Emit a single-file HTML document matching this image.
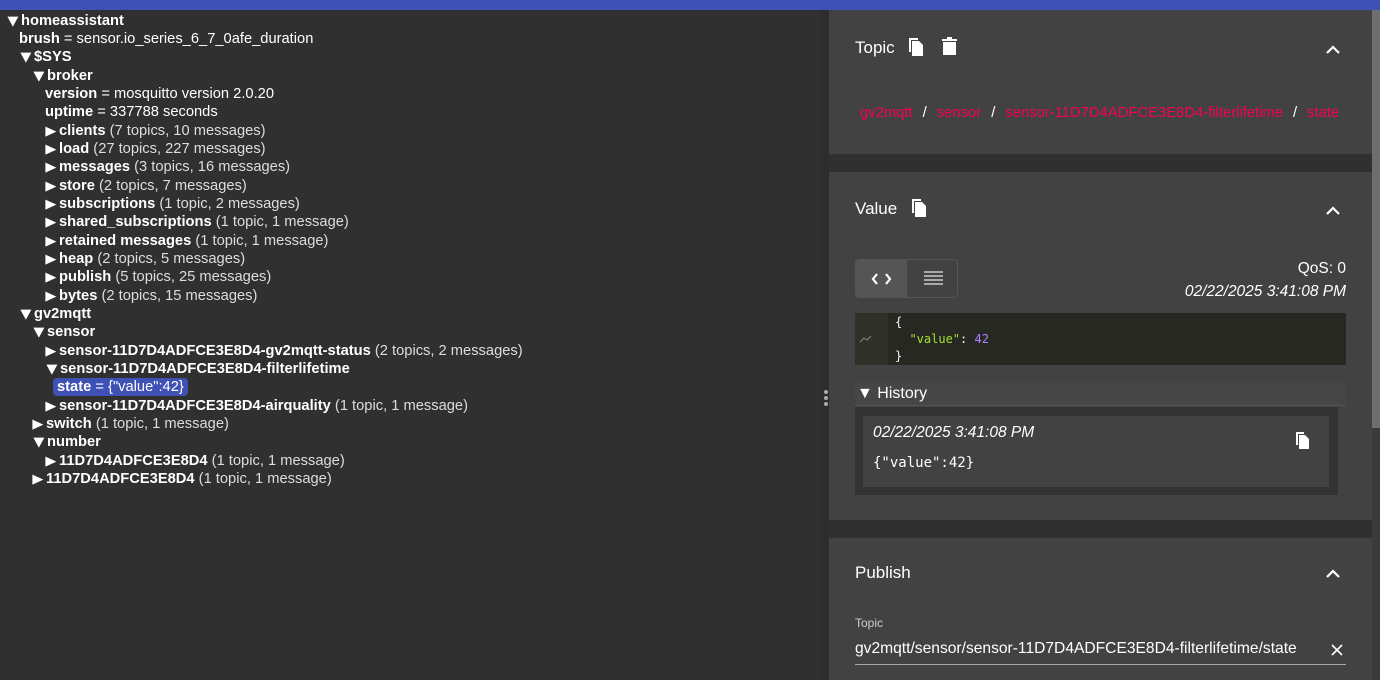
<!DOCTYPE html>
<html><head><meta charset="utf-8"><style>
*{margin:0;padding:0;box-sizing:border-box}
body{width:1380px;height:680px;overflow:hidden;background:#303030;font-family:"Liberation Sans",Arial,sans-serif;color:#fff;position:relative}
.top{position:absolute;left:0;top:0;width:1380px;height:10px;background:#3f51b5}
.tree{position:absolute;left:0;top:11px;width:820px;height:669px;background:#303030}
.r{position:absolute;font-size:14.7px;line-height:18px;white-space:nowrap;color:#fff}
.r b{font-weight:bold}
.r .m{color:#ddd}
.a{display:inline-block;width:13px;font-size:13px;font-family:"DejaVu Sans",sans-serif;transform:scaleX(1.1)}
.div{position:absolute;left:820px;top:10px;width:9px;height:670px;background:#2d2d2d}
.dots{position:absolute;left:824px;top:390px;width:4px}
.dots i{display:block;width:4px;height:4px;border-radius:2px;background:#aaa;margin-bottom:2px}
.p{position:absolute;left:829px;width:543px;background:#424242}
.sb{position:absolute;left:1372px;top:10px;width:8px;height:670px;background:#3b3b3b}
.sb i{position:absolute;left:0;top:0;width:8px;height:418px;background:#6e6e6e}
.t{position:absolute;font-size:17px}
.crumb{position:absolute;left:860px;top:105px;font-size:14.8px;color:#f50057;white-space:nowrap}
.crumb s{text-decoration:none;color:#fff;margin:0 10px}
</style></head><body>
<div class="top"></div>
<div class="tree">
<div class="r" style="left:8px;top:1px"><span class="a">▼</span><b>homeassistant</b></div>
<div class="r" style="left:19px;top:19px"><b>brush</b> = sensor.io_series_6_7_0afe_duration</div>
<div class="r" style="left:21px;top:37px"><span class="a">▼</span><b>$SYS</b></div>
<div class="r" style="left:34px;top:56px"><span class="a">▼</span><b>broker</b></div>
<div class="r" style="left:45px;top:74px"><b>version</b> = mosquitto version 2.0.20</div>
<div class="r" style="left:45px;top:92px"><b>uptime</b> = 337788 seconds</div>
<div class="r" style="left:46px;top:111px"><span class="a">▶</span><b>clients</b> <span class="m">(7 topics, 10 messages)</span></div>
<div class="r" style="left:46px;top:129px"><span class="a">▶</span><b>load</b> <span class="m">(27 topics, 227 messages)</span></div>
<div class="r" style="left:46px;top:147px"><span class="a">▶</span><b>messages</b> <span class="m">(3 topics, 16 messages)</span></div>
<div class="r" style="left:46px;top:166px"><span class="a">▶</span><b>store</b> <span class="m">(2 topics, 7 messages)</span></div>
<div class="r" style="left:46px;top:184px"><span class="a">▶</span><b>subscriptions</b> <span class="m">(1 topic, 2 messages)</span></div>
<div class="r" style="left:46px;top:202px"><span class="a">▶</span><b>shared_subscriptions</b> <span class="m">(1 topic, 1 message)</span></div>
<div class="r" style="left:46px;top:221px"><span class="a">▶</span><b>retained messages</b> <span class="m">(1 topic, 1 message)</span></div>
<div class="r" style="left:46px;top:239px"><span class="a">▶</span><b>heap</b> <span class="m">(2 topics, 5 messages)</span></div>
<div class="r" style="left:46px;top:257px"><span class="a">▶</span><b>publish</b> <span class="m">(5 topics, 25 messages)</span></div>
<div class="r" style="left:46px;top:276px"><span class="a">▶</span><b>bytes</b> <span class="m">(2 topics, 15 messages)</span></div>
<div class="r" style="left:21px;top:294px"><span class="a">▼</span><b>gv2mqtt</b></div>
<div class="r" style="left:34px;top:312px"><span class="a">▼</span><b>sensor</b></div>
<div class="r" style="left:46px;top:331px"><span class="a">▶</span><b>sensor-11D7D4ADFCE3E8D4-gv2mqtt-status</b> <span class="m">(2 topics, 2 messages)</span></div>
<div class="r" style="left:47px;top:349px"><span class="a">▼</span><b>sensor-11D7D4ADFCE3E8D4-filterlifetime</b></div>
<div class="r" style="left:53px;top:367px;background:#3f51b5;border-radius:4px;padding:0 4px"><b>state</b> = {"value":42}</div>
<div class="r" style="left:46px;top:386px"><span class="a">▶</span><b>sensor-11D7D4ADFCE3E8D4-airquality</b> <span class="m">(1 topic, 1 message)</span></div>
<div class="r" style="left:33px;top:404px"><span class="a">▶</span><b>switch</b> <span class="m">(1 topic, 1 message)</span></div>
<div class="r" style="left:34px;top:422px"><span class="a">▼</span><b>number</b></div>
<div class="r" style="left:46px;top:441px"><span class="a">▶</span><b>11D7D4ADFCE3E8D4</b> <span class="m">(1 topic, 1 message)</span></div>
<div class="r" style="left:33px;top:459px"><span class="a">▶</span><b>11D7D4ADFCE3E8D4</b> <span class="m">(1 topic, 1 message)</span></div>
</div>
<div class="div"></div>
<div class="dots"><i></i><i></i><i></i></div>

<div class="p" style="top:10px;height:144px"></div>
<div class="p" style="top:172px;height:348px"></div>
<div class="p" style="top:538px;height:142px"></div>
<div class="sb"><i></i></div>

<div style="position:absolute;left:855px;top:259px;width:103px;height:39px;border:1px solid #555;border-radius:4px;overflow:hidden"><div style="width:52px;height:39px;background:#555;border-right:1px solid #444"></div></div>

<svg style="position:absolute;left:0;top:0" width="1380" height="680">
<g fill="#fff">
<path d="M909 38h2v14h-2zM909 38h9v2h-9z"/><path d="M912 41h7l4 4v11h-11z"/>
<path d="M942 39h15v2h-15zM947 37h5v2h-5zM943 42h13v13h-13z"/>
<path d="M912 199h2v14h-2zM912 199h9v2h-9z"/><path d="M915 202h7l4 4v11h-11z"/>
</g>
<g stroke="#fff" stroke-width="2.2" fill="none">
<path d="M1327 53l6-6 6 6M1327 214l6-6 6 6M1327 577l6-6 6 6"/>
<path d="M1332 645l10 10M1342 645l-10 10" stroke-width="1.6"/>
<path d="M877 274l-4 5 4 5M886 274l4 5-4 5"/>
</g>
<g stroke="#aaa" stroke-width="2"><path d="M924 272h19M924 276h19M924 280h19M924 284h19"/></g>
</svg>

<div class="t" style="left:855px;top:38px">Topic</div>
<div class="crumb">gv2mqtt<s>/</s>sensor<s>/</s>sensor-11D7D4ADFCE3E8D4-filterlifetime<s>/</s>state</div>
<div class="t" style="left:855px;top:199px">Value</div>
<div class="t" style="right:34px;top:260px;font-size:15.5px">QoS: 0</div>
<div class="t" style="right:34px;top:283px;font-size:15.5px;font-style:italic">02/22/2025 3:41:08 PM</div>
<div style="position:absolute;left:855px;top:313px;width:491px;height:52px;background:#272822"></div>
<div style="position:absolute;left:855px;top:313px;width:33px;height:52px;background:#2f3129"></div>
<div style="position:absolute;left:895px;top:314px;font-family:'DejaVu Sans Mono',monospace;font-size:12px;line-height:17px;color:#f8f8f2;white-space:pre">{
  <span style="color:#a6e22e">"value"</span>: <span style="color:#ae81ff">42</span>
}</div>
<svg style="position:absolute;left:0;top:0" width="900" height="360"><path d="M860 342l4-4 3 2 4-4" stroke="#888" fill="none"/></svg>
<div style="position:absolute;left:855px;top:383px;width:491px;height:23px;background:#464646;border-bottom:1px solid #555"></div>
<div class="t" style="left:857px;top:385px;font-size:16px">▼ History</div>
<div style="position:absolute;left:855px;top:407px;width:483px;height:88px;background:#333"></div>
<div style="position:absolute;left:863px;top:416px;width:466px;height:71px;background:#424242"></div>
<div class="t" style="left:873px;top:424px;font-size:15.5px;font-style:italic">02/22/2025 3:41:08 PM</div>
<div style="position:absolute;left:873px;top:455px;font-family:'DejaVu Sans Mono',monospace;font-size:14px">{"value":42}</div>
<svg style="position:absolute;left:0;top:0" width="1380" height="460"><g fill="#fff"><path d="M1296 432h2v13h-2zM1296 432h8v2h-8z"/><path d="M1299 435h6l4 4v10h-10z"/></g></svg>
<div class="t" style="left:855px;top:563px">Publish</div>
<div style="position:absolute;left:855px;top:616px;font-size:12px;color:#ccc">Topic</div>
<div style="position:absolute;left:855px;top:640px;font-size:15.6px">gv2mqtt/sensor/sensor-11D7D4ADFCE3E8D4-filterlifetime/state</div>
<div style="position:absolute;left:855px;top:664px;width:491px;height:1px;background:#aaa"></div>
</body></html>
